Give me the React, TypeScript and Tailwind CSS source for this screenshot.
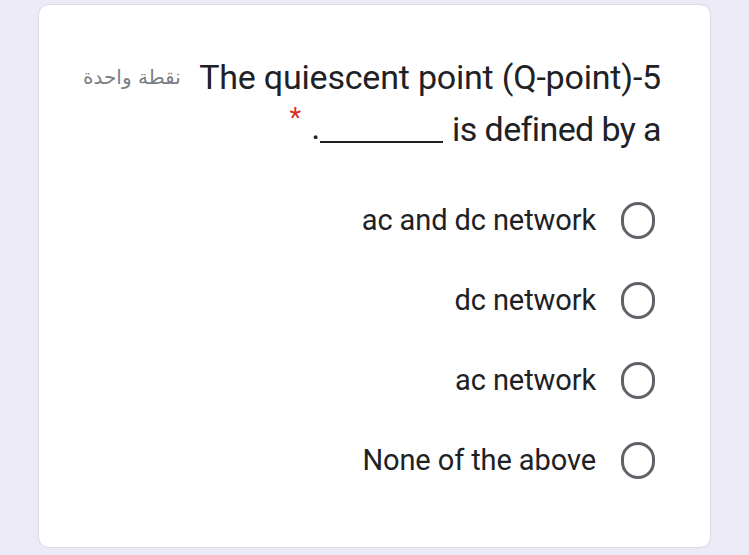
import React from "react";

const options = ["ac and dc network", "dc network", "ac network", "None of the above"];

export default function App() {
  return (
    <div className="w-[749px] h-[555px] bg-[#eceaf6] pt-[4px] px-[38px] pb-[7px]" style={{ fontFamily: "Roboto, 'Noto Sans', sans-serif" }}>
      <div className="h-full bg-white rounded-[11px] border border-[#dcdae6] pr-[49px] pl-[44px] pt-[52px]">
        <div className="flex items-center justify-between h-[40px]">
          <span className="text-[20px] text-[#7a7f84]" style={{ fontFamily: "'DejaVu Sans', sans-serif" }} dir="rtl">نقطة واحدة</span>
          <span className="text-[34px] text-[#202124] tracking-[-0.2px] leading-none">The quiescent point (Q-point)-5</span>
        </div>
        <div className="flex items-end justify-end h-[49px] text-[34px] text-[#202124] leading-none">
          <span className="text-[#d93025] text-[27px] mr-[10px] mb-[14px]">*</span>
          <span className="mb-[2px]">.</span>
          <span className="inline-block w-[123px] border-b-[2px] border-[#202124] mb-[3px] mr-[9px]"></span>
          <span className="tracking-[-0.6px]">is defined by a</span>
        </div>
        <div className="flex flex-col items-end mt-[56px] gap-[43px] pr-[6px]">
          {options.map((o) => (
            <div key={o} className="flex items-center h-[37px]">
              <span className="text-[29px] text-[#202124] tracking-[-0.1px]">{o}</span>
              <span className="ml-[25px] w-[34px] h-[37px] rounded-full border-[3.5px] border-[#5f6368]"></span>
            </div>
          ))}
        </div>
      </div>
    </div>
  );
}
